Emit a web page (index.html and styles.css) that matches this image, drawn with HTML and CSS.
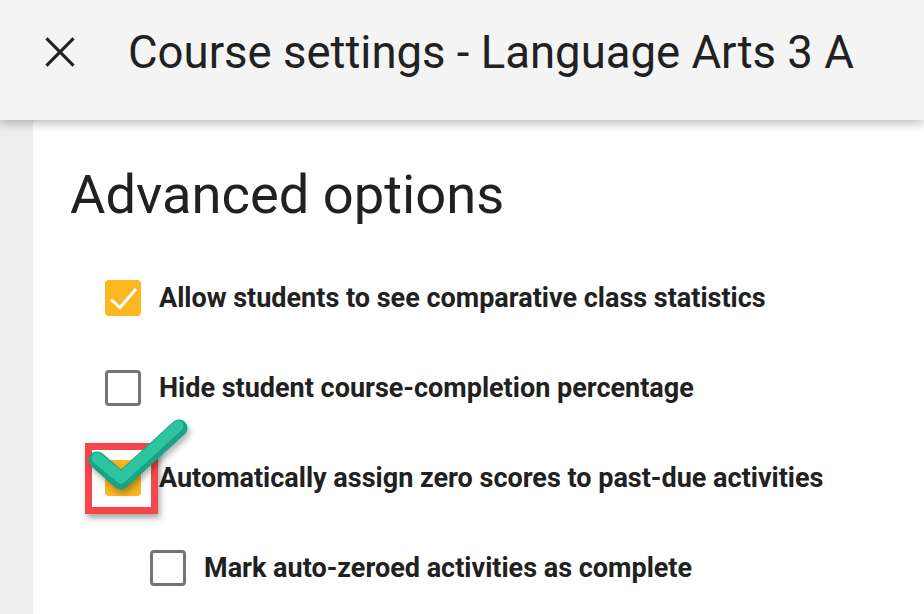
FILE: index.html
```html
<!DOCTYPE html>
<html lang="en">
<head>
    <meta charset="UTF-8">
    <title>Course settings</title>
    <link rel="stylesheet" href="styles.css">
</head>
<body>
    <header class="topbar">
        <button class="close-btn" aria-label="Close">
            <svg viewBox="0 0 24 24" width="50" height="50"><path d="M5.5 5.5 L18.5 18.5 M18.5 5.5 L5.5 18.5" stroke="#212121" stroke-width="1.5" fill="none"/></svg>
        </button>
        <h1 class="title">Course settings - Language Arts 3 A</h1>
    </header>

    <div class="layout">
        <div class="gutter"></div>
        <main class="panel">
            <h2 class="section-title">Advanced options</h2>

            <ul class="options">
                <li class="option">
                    <span class="box checked">
                        <svg viewBox="0 0 36 36" width="36" height="36"><path d="M6 19.5 L15 27.5 L31 9" stroke="#fff" stroke-width="3" fill="none"/></svg>
                    </span>
                    <span class="label">Allow students to see comparative class statistics</span>
                </li>
                <li class="option">
                    <span class="box"></span>
                    <span class="label">Hide student course-completion percentage</span>
                </li>
                <li class="option highlighted">
                    <span class="box checked"></span>
                    <span class="label">Automatically assign zero scores to past-due activities</span>
                    <span class="marker"></span>
                    <svg class="tick" viewBox="0 0 110 90" width="110" height="90">
                        <path d="M14 43 L38 64 L96 11" stroke="#17a585" stroke-width="17" stroke-linecap="round" stroke-linejoin="round" fill="none"/>
                        <path d="M14 41 L38 61 L95 9" stroke="#2ec4a1" stroke-width="11" stroke-linecap="round" stroke-linejoin="round" fill="none"/>
                    </svg>
                </li>
                <li class="option nested">
                    <span class="box"></span>
                    <span class="label">Mark auto-zeroed activities as complete</span>
                </li>
            </ul>
        </main>
    </div>
</body>
</html>
```

FILE: styles.css
```css
body {
    margin: 0;
    font-family: Roboto, 'Liberation Sans', Arial, sans-serif;
    color: #212121;
    background-color: #eeeeee;
    height: 614px;
    overflow: hidden;
}
.topbar {
    position: relative;
    z-index: 2;
    height: 120px;
    display: flex;
    align-items: center;
    background-color: #f4f4f4;
    box-shadow: 0 3px 10px rgba(0, 0, 0, 0.28);
}
.close-btn {
    background: none;
    border: none;
    padding: 0;
    margin: 0 0 16px 35px;
    display: flex;
    cursor: pointer;
}
.title {
    margin: 0 0 16px 43px;
    font-size: 45.5px;
    font-weight: 400;
    color: #212121;
}
.layout {
    display: flex;
    height: 494px;
}
.gutter {
    width: 33px;
    flex-shrink: 0;
}
.panel {
    flex: 1;
    background-color: #ffffff;
    border-top-left-radius: 4px;
    padding: 40px 0 0 37px;
}
.section-title {
    margin: 0 0 50px;
    font-size: 54.3px;
    font-weight: 400;
    line-height: 70px;
}
.options {
    list-style: none;
    margin: 0;
    padding: 0 0 0 35px;
    display: flex;
    flex-direction: column;
    gap: 54px;
}
.option {
    position: relative;
    display: flex;
    align-items: center;
    gap: 18px;
    height: 36px;
}
.option.nested {
    margin-left: 45px;
}
.box {
    width: 36px;
    height: 36px;
    box-sizing: border-box;
    border: 3px solid #757575;
    border-radius: 4px;
    display: flex;
    align-items: center;
    justify-content: center;
    flex-shrink: 0;
}
.box.checked {
    border: none;
    background-color: #fbb720;
}
.label {
    font-size: 27px;
    font-weight: 700;
    color: #212121;
}
.marker {
    position: absolute;
    left: -20px;
    top: -17px;
    width: 73px;
    height: 71px;
    box-sizing: border-box;
    border: 7px solid #f5464c;
    box-shadow: 2px 4px 6px rgba(0, 0, 0, 0.35);
}
.tick {
    position: absolute;
    left: -22px;
    top: -43px;
    filter: drop-shadow(2px 4px 3px rgba(0, 0, 0, 0.3));
}
```
